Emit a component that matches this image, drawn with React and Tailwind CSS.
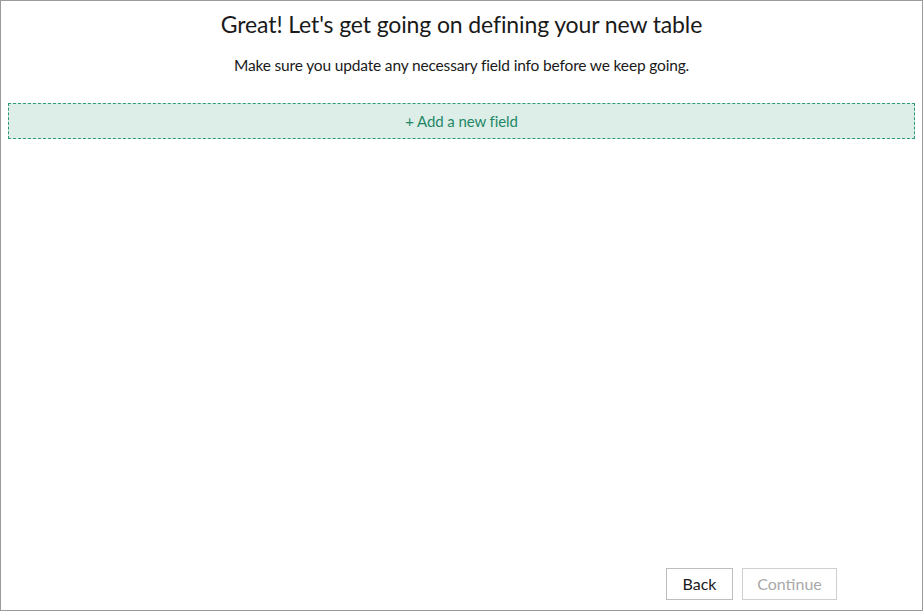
export default function App() {
  return (
    <div
      className="flex h-[611px] w-[923px] flex-col border border-[#9a9a9a] bg-white text-[#1a1a1a]"
      style={{ fontFamily: 'Lato, "Noto Sans", sans-serif' }}
    >
      <h1 className="mt-[8px] text-center text-[23px] leading-[30px] tracking-[-0.12px]">
        Great! Let's get going on defining your new table
      </h1>
      <p className="mt-[16px] text-center text-[15.5px] leading-[20px] tracking-[-0.16px]">
        Make sure you update any necessary field info before we keep going.
      </p>
      <div className="mx-[7px] mt-[28px] flex h-[36px] items-center justify-center border border-dashed border-[#2e9a78] bg-[#ddeee9] text-[15px] tracking-[-0.1px] text-[#1f8766]">
        + Add a new field
      </div>
      <div className="flex-1" />
      <div className="mb-[10px] mr-[85px] flex justify-end gap-[9px]">
        <button
          type="button"
          className="h-[32px] w-[67px] border border-[#bdbdbd] bg-white text-[16px] text-[#1a1a1a]"
        >
          Back
        </button>
        <button
          type="button"
          className="h-[32px] w-[95px] border border-[#cfcfcf] bg-white text-[16px] text-[#a8a8a8]"
        >
          Continue
        </button>
      </div>
    </div>
  );
}
